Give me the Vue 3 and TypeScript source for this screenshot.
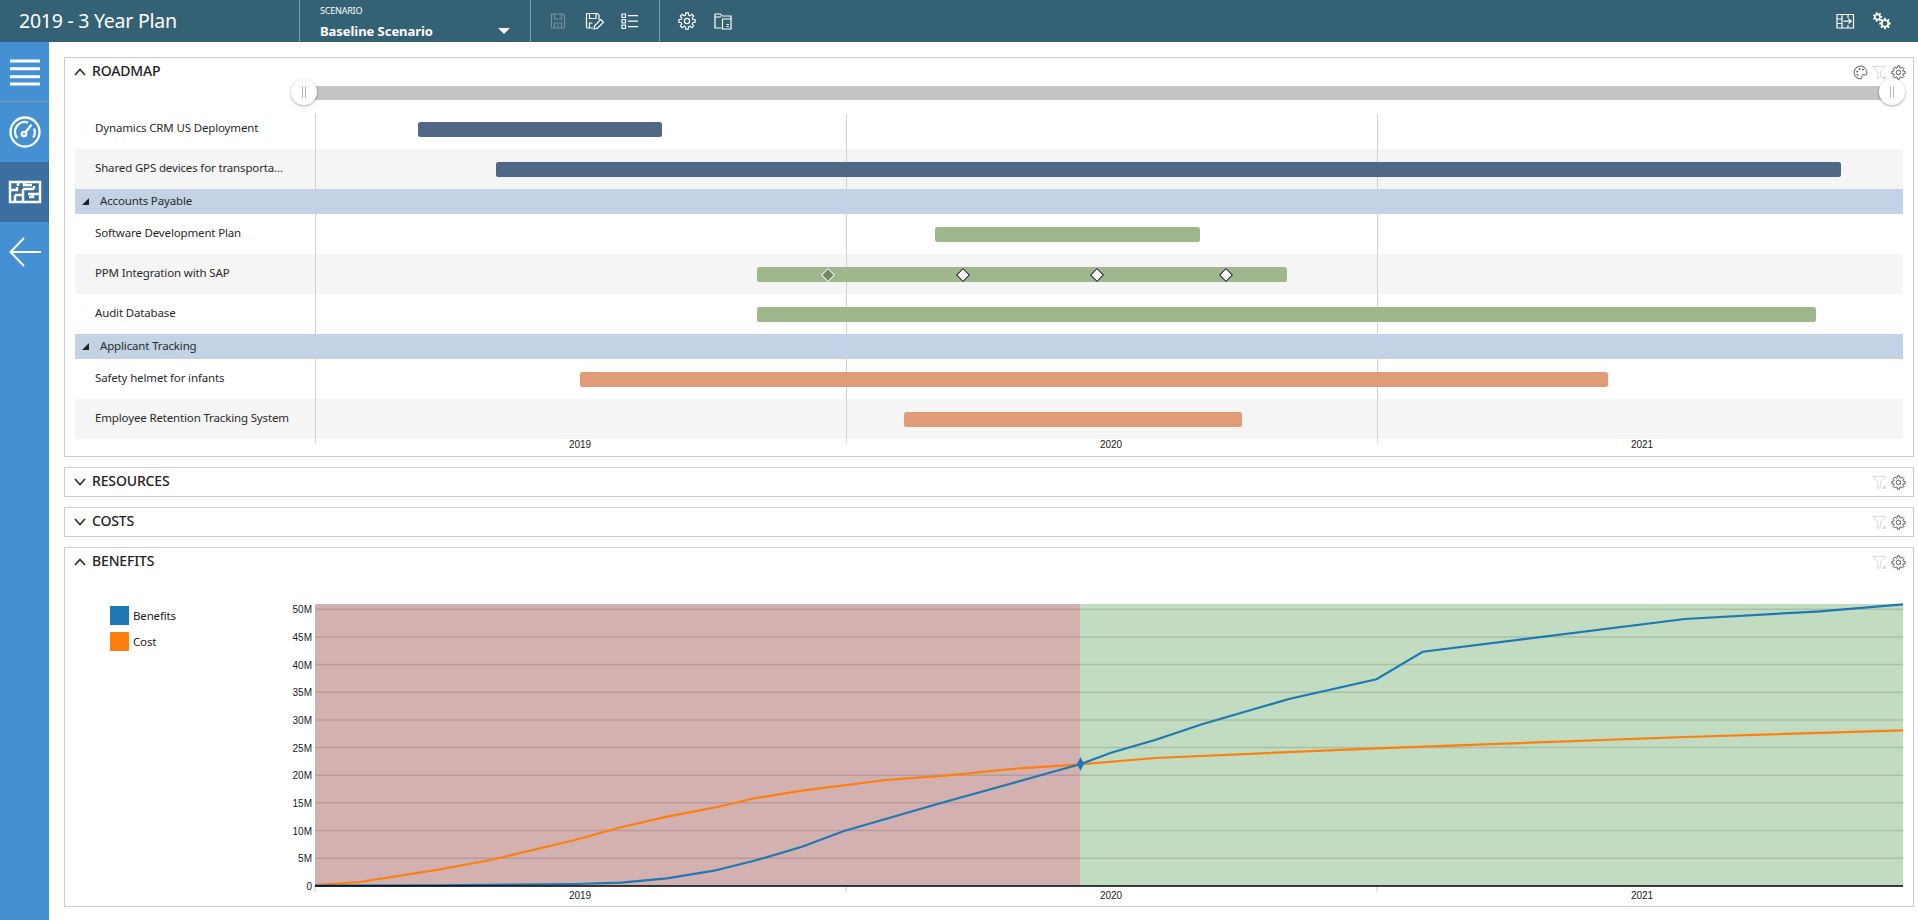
<script setup lang="ts">
interface Row { kind: 'item' | 'group'; label: string; alt?: boolean; from?: number; to?: number; color?: string; marks?: { x: number; done?: boolean }[] }

const trackX = 315
const rows: Row[] = [
  { kind: 'item', label: 'Dynamics CRM US Deployment', from: 418, to: 662, color: '#506886' },
  { kind: 'item', label: 'Shared GPS devices for transporta...', alt: true, from: 496, to: 1841, color: '#506886' },
  { kind: 'group', label: 'Accounts Payable' },
  { kind: 'item', label: 'Software Development Plan', from: 935, to: 1200, color: '#9fb78d' },
  { kind: 'item', label: 'PPM Integration with SAP', alt: true, from: 757, to: 1287, color: '#9fb78d',
    marks: [{ x: 828, done: true }, { x: 963 }, { x: 1097 }, { x: 1226 }] },
  { kind: 'item', label: 'Audit Database', from: 757, to: 1816, color: '#9fb78d' },
  { kind: 'group', label: 'Applicant Tracking' },
  { kind: 'item', label: 'Safety helmet for infants', from: 580, to: 1608, color: '#e09c77' },
  { kind: 'item', label: 'Employee Retention Tracking System', alt: true, from: 904, to: 1242, color: '#e09c77' },
]

const gridX = [315, 846, 1377]
const years = [{ t: '2019', x: 580 }, { t: '2020', x: 1111 }, { t: '2021', x: 1642 }]

const y0 = 885.8
const ticks = Array.from({ length: 11 }, (_, i) => ({
  y: y0 - i * 27.65,
  label: i === 0 ? '0' : `${i * 5}M`,
}))

const pts = (a: number[][]) => a.map(p => p.join(',')).join(' ')
const benefits = pts([[315, 885.6], [440, 885.3], [575, 884], [621, 882.7], [667, 878.3], [714, 870.7], [756, 860.3], [802, 846.7], [844, 831], [941, 803], [1080, 764.3], [1111, 752.7], [1155, 740], [1202, 724.3], [1290, 698.7], [1376.5, 679.3], [1422.7, 651.7], [1685, 619], [1820, 611.3], [1903, 604.3]])
const cost = pts([[315, 885], [360, 882], [440, 869.3], [490.5, 860], [575, 840], [621, 827.3], [667, 816.7], [714, 807.7], [756, 798], [802, 790.7], [886, 780], [945, 775.7], [1012, 769], [1080, 764.3], [1155, 758], [1376.5, 748.3], [1685, 737], [1903, 730.3]])

function gear(cx: number, cy: number, ro: number, ri: number, n: number, hole: number): string {
  const step = (Math.PI * 2) / n
  let d = ''
  for (let i = 0; i < n; i++) {
    const a = i * step
    const list = [[a - step * 0.36, ri], [a - step * 0.2, ro], [a + step * 0.2, ro], [a + step * 0.36, ri]]
    for (const [t, r] of list) {
      d += `${d ? 'L' : 'M'}${(cx + r * Math.cos(t)).toFixed(2)} ${(cy + r * Math.sin(t)).toFixed(2)}`
    }
  }
  d += 'Z'
  d += `M${cx - hole} ${cy}a${hole} ${hole} 0 1 0 ${hole * 2} 0a${hole} ${hole} 0 1 0 ${-hole * 2} 0Z`
  return d
}
const gear20 = gear(10, 10, 8.2, 6, 8, 2.6)
const gearPanel = gear(8, 8, 7.2, 5.2, 8, 2.4)
const gearA = gear(6.5, 6, 4.8, 3.4, 7, 1.8)
const gearB = gear(14, 12.5, 5.8, 4.1, 8, 2.4)
</script>

<template>
  <div class="app">
    <header class="topbar">
      <div class="title">2019 - 3 Year Plan</div>
      <div class="scenario">
        <div class="scenario-cap">SCENARIO</div>
        <div class="scenario-row">
          <span class="scenario-name">Baseline Scenario</span>
          <span class="caret"></span>
        </div>
      </div>
      <div class="tool-group wide">
        <svg class="tool dim" viewBox="0 0 20 20"><path d="M3.500 3h11.500l1.500 1.500v12.500h-13z" /><path d="M6.500 3v5h7V3M6.500 17v-5h7v5M10 13.500v2.500" /></svg>
        <svg class="tool" viewBox="0 0 20 20"><path d="M2.500 2.500h11l1.500 1.500v5M9 17h-6.500zM2.500 2.500v14.500M5.500 2.500v5h6.500v-5M5.500 17v-5h3" /><path d="M10 18l.8-3.500 6-6 2.700 2.700-6 6z" /></svg>
        <svg class="tool" viewBox="0 0 20 20"><path d="M2 3h3.500v3.500H2zM2 8.500h3.500v3.500H2zM2 14h3.500v3.500H2zM8 4.700h10M8 10.200h10M8 15.700h10" /></svg>
      </div>
      <div class="tool-group">
        <svg class="tool" viewBox="0 0 20 20"><path :d="gear20" /></svg>
        <svg class="tool" viewBox="0 0 20 20"><path d="M8.500 17H2V3h5.500l1.500 2h9v3" /><path d="M9.500 8H18v10H9.500zM2 6h6M13.500 13.500h2.500M13.500 15.500h2.500" /></svg>
      </div>
      <div class="tool-group end">
        <svg class="tool" viewBox="0 0 20 20"><path d="M2 3.500h16.500v13.500H2zM7 3.500v13.500M13 3.500v3.500M13 14v3M2 8h5M2 12.500h5" /><path d="M8.500 10.200h7.500M13.500 7.800l2.700 2.400-2.700 2.400" /></svg>
        <svg class="tool solid" viewBox="0 0 20 20"><path :d="gearA" /><path :d="gearB" /></svg>
      </div>
    </header>

    <div class="body">
      <nav class="sidebar">
        <div class="nav-item nav-first">
          <svg viewBox="0 0 30 26" class="nav-icon ham"><path d="M0 2h30M0 9.700h30M0 17.700h30M0 25h30" /></svg>
        </div>
        <div class="nav-item">
          <svg viewBox="0 0 32 32" class="nav-icon gauge">
            <circle cx="16" cy="16" r="14.500" />
            <path d="M8.300 22a9.800 9.800 0 0 1 10.700-15.500M25 12.500a9.800 9.800 0 0 1-.8 9" />
            <circle cx="15" cy="18" r="2.200" />
            <path d="M16.500 16.300L22.500 8.800" />
          </svg>
        </div>
        <div class="nav-item active">
          <svg viewBox="0 0 32 22" class="nav-icon plan">
            <path d="M1 1h30v20H1z" />
            <path d="M9 1v4M15 1v3h8M1 9h7v-3M14 8h11M14 8v13M6 14h8M6 14v7M19 13h12M24 13v3h-4M25 5v3" />
          </svg>
        </div>
        <div class="nav-item">
          <svg viewBox="0 0 32 30" class="nav-icon arrow"><path d="M15 1L1.500 15 15 29M2 15h30" /></svg>
        </div>
      </nav>

      <main class="main">
        <section class="panel roadmap">
          <div class="panel-head">
            <svg class="chev" viewBox="0 0 12 8"><path d="M1 7l5-5.500L11 7" /></svg>
            <span class="panel-title">ROADMAP</span>
            <div class="panel-tools">
              <svg class="ptool palette" viewBox="0 0 16 16">
                <path d="M8 1.200a6.800 6.800 0 1 0 0 13.600c1.400 0 1.900-.9 1.500-1.900-.5-1.200.1-2.300 1.500-2.300h2.200c1 0 1.600-.7 1.600-1.800 0-4.200-3-7.600-6.800-7.600z" />
                <circle cx="4.500" cy="7" r="1" /><circle cx="7" cy="4.300" r="1" /><circle cx="10.500" cy="4.800" r="1" /><circle cx="4.800" cy="10.500" r="1" />
              </svg>
              <svg class="ptool filter" viewBox="0 0 16 16">
                <path d="M.7 1.500h13.600L9 7.500v5.500l-3 1.500v-7z" />
                <path class="x" d="M11.500 12l3 3M14.500 12l-3 3" />
              </svg>
              <svg class="ptool cog" viewBox="0 0 16 16"><path :d="gearPanel" /></svg>
            </div>
          </div>

          <div class="slider">
            <div class="slider-track"></div>
            <span class="handle left"><i></i><i></i></span>
            <span class="handle right"><i></i><i></i></span>
          </div>

          <div class="gantt">
            <span v-for="x in gridX" :key="x" class="grid-line" :style="{ left: `${x - 75}px` }"></span>
            <template v-for="row in rows" :key="row.label">
              <div v-if="row.kind === 'group'" class="row group">
                <span class="tri"></span>
                <span class="group-label">{{ row.label }}</span>
              </div>
              <div v-else class="row item" :class="{ alt: row.alt }">
                <span class="row-label">{{ row.label }}</span>
                <div class="track">
                  <div class="bar" :style="{ left: `${row.from! - trackX}px`, width: `${row.to! - row.from!}px`, background: row.color }"></div>
                  <span v-for="m in row.marks" :key="m.x" class="mark" :class="{ done: m.done }" :style="{ left: `${m.x - trackX}px` }"></span>
                </div>
              </div>
            </template>
            <div class="years">
              <span v-for="y in years" :key="y.t" class="year" :style="{ left: `${y.x - trackX}px` }">{{ y.t }}</span>
            </div>
          </div>
        </section>

        <section class="panel collapsed">
          <div class="panel-head">
            <svg class="chev" viewBox="0 0 12 8"><path d="M1 1l5 5.500L11 1" /></svg>
            <span class="panel-title">RESOURCES</span>
            <div class="panel-tools">
              <svg class="ptool filter" viewBox="0 0 16 16"><path d="M.7 1.500h13.600L9 7.500v5.500l-3 1.500v-7z" /><path class="x" d="M11.500 12l3 3M14.500 12l-3 3" /></svg>
              <svg class="ptool cog" viewBox="0 0 16 16"><path :d="gearPanel" /></svg>
            </div>
          </div>
        </section>

        <section class="panel collapsed">
          <div class="panel-head">
            <svg class="chev" viewBox="0 0 12 8"><path d="M1 1l5 5.500L11 1" /></svg>
            <span class="panel-title">COSTS</span>
            <div class="panel-tools">
              <svg class="ptool filter" viewBox="0 0 16 16"><path d="M.7 1.500h13.600L9 7.500v5.500l-3 1.500v-7z" /><path class="x" d="M11.500 12l3 3M14.500 12l-3 3" /></svg>
              <svg class="ptool cog" viewBox="0 0 16 16"><path :d="gearPanel" /></svg>
            </div>
          </div>
        </section>

        <section class="panel benefits">
          <div class="panel-head">
            <svg class="chev" viewBox="0 0 12 8"><path d="M1 7l5-5.500L11 7" /></svg>
            <span class="panel-title">BENEFITS</span>
            <div class="panel-tools">
              <svg class="ptool filter" viewBox="0 0 16 16"><path d="M.7 1.500h13.600L9 7.500v5.500l-3 1.500v-7z" /><path class="x" d="M11.500 12l3 3M14.500 12l-3 3" /></svg>
              <svg class="ptool cog" viewBox="0 0 16 16"><path :d="gearPanel" /></svg>
            </div>
          </div>
          <div class="chart-wrap">
            <ul class="legend">
              <li><span class="swatch blue"></span>Benefits</li>
              <li><span class="swatch orange"></span>Cost</li>
            </ul>
            <svg class="chart" viewBox="270 600 1643 306">
              <rect x="315" y="604" width="765" height="282" fill="#d4b1b1" />
              <rect x="1080" y="604" width="823" height="282" fill="#c2dcc1" />
              <line v-for="t in ticks.slice(1)" :key="t.y" x1="315" x2="1903" :y1="t.y" :y2="t.y" stroke="#000" stroke-opacity=".13" stroke-width="1.500" />
              <text v-for="t in ticks" :key="t.label" class="axis" x="312" :y="t.y + 4" text-anchor="end">{{ t.label }}</text>
              <line v-for="x in gridX" :key="x" :x1="x" :x2="x" y1="886" y2="892" stroke="#ccc" />
              <text v-for="y in years" :key="y.t" class="axis" :x="y.x" y="899" text-anchor="middle">{{ y.t }}</text>
              <polyline :points="cost" fill="none" stroke="#ff7f0e" stroke-width="2.200" />
              <polyline :points="benefits" fill="none" stroke="#1f77b4" stroke-width="2.200" />
              <path d="M1080.500 757l3.500 7-3.500 7-3.500-7z" fill="#1f77b4" />
              <line x1="315" x2="1903" y1="886" y2="886" stroke="#000" stroke-width="1.500" />
            </svg>
          </div>
        </section>
      </main>
    </div>
  </div>
</template>

<style scoped>
.app {
  width: 1918px;
  height: 920px;
  display: flex;
  flex-direction: column;
  overflow: hidden;
  background: #fff;
  font-family: "Noto Sans", "Open Sans", sans-serif;
  color: #222;
}
.topbar {
  height: 42px;
  flex: none;
  display: flex;
  background: #346274;
  color: #fff;
}
.title {
  width: 300px;
  box-sizing: border-box;
  padding-left: 19px;
  font-size: 19.500px;
  line-height: 42px;
  letter-spacing: -0.25px;
  border-right: 1px solid #7f9aa6;
}
.scenario {
  width: 231px;
  box-sizing: border-box;
  padding: 4px 20px 0 20px;
  border-right: 1px solid #7f9aa6;
}
.scenario-cap {
  font-size: 9px;
  line-height: 13px;
  letter-spacing: -0.2px;
}
.scenario-row {
  display: flex;
  align-items: center;
  justify-content: space-between;
  margin-top: 5px;
  height: 18px;
}
.scenario-name {
  font-size: 13px;
  font-weight: 700;
  letter-spacing: -0.05px;
}
.caret {
  width: 0;
  height: 0;
  border-left: 6.500px solid transparent;
  border-right: 6.500px solid transparent;
  border-top: 6.500px solid #fff;
}
.tool-group {
  display: flex;
  align-items: center;
  gap: 16px;
  padding-left: 17px;
}
.tool-group.wide {
  width: 129px;
  box-sizing: border-box;
  border-right: 1px solid #7f9aa6;
}
.tool-group.end {
  margin-left: auto;
  padding: 0 27px 0 0;
}
.tool {
  width: 20px;
  height: 20px;
  fill: none;
  stroke: #fff;
  stroke-width: 1.200;
}
.tool.dim {
  stroke: #7a8f98;
}
.tool.solid {
  fill: #fff;
  fill-rule: evenodd;
  stroke: none;
}
.body {
  flex: 1;
  display: flex;
  min-height: 0;
}
.sidebar {
  width: 49px;
  flex: none;
  background: #4590d2;
  display: flex;
  flex-direction: column;
}
.nav-item {
  height: 60px;
  display: flex;
  align-items: center;
  justify-content: center;
}
.nav-first {
  box-sizing: border-box;
  border-bottom: 1px solid #7a9cb8;
}
.nav-item.active {
  background: #3a6f9f;
}
.nav-icon {
  fill: none;
  stroke: #fff;
  overflow: visible;
}
.ham {
  width: 30px;
  height: 26px;
  stroke-width: 3;
}
.gauge {
  width: 32px;
  height: 32px;
  stroke-width: 2.300;
}
.plan {
  width: 32px;
  height: 22px;
  stroke-width: 2.500;
}
.arrow {
  width: 32px;
  height: 30px;
  stroke-width: 2;
}
.main {
  flex: 1;
  min-width: 0;
  box-sizing: border-box;
  padding: 15px 4px 0 15px;
  display: flex;
  flex-direction: column;
  gap: 10px;
}
.panel {
  box-sizing: border-box;
  border: 1px solid #ccc;
}
.roadmap {
  height: 400px;
}
.collapsed {
  height: 30px;
}
.benefits {
  height: 360px;
}
.panel-head {
  height: 28px;
  display: flex;
  align-items: center;
  padding: 0 7px 0 9px;
}
.chev {
  width: 12px;
  height: 8px;
  fill: none;
  stroke: #333;
  stroke-width: 1.800;
  margin-right: 6px;
}
.panel-title {
  font-size: 14px;
  line-height: 18px;
  padding-bottom: 2px;
  font-weight: 500;
  letter-spacing: -0.15px;
  color: #222;
}
.panel-tools {
  margin-left: auto;
  display: flex;
  gap: 4px;
  align-items: center;
}
.ptool {
  width: 15px;
  height: 15px;
  fill: none;
  stroke-width: 1;
}
.palette,
.cog {
  stroke: #4c5258;
}
.palette circle {
  fill: #4c5258;
  stroke: none;
}
.filter {
  stroke: #d6d6d6;
}
.filter .x {
  stroke: #f0a8a8;
}
.slider {
  position: relative;
  height: 23px;
  margin-left: 238px;
  margin-right: 21px;
}
.slider-track {
  height: 14px;
  background: #c4c4c4;
}
.handle {
  position: absolute;
  top: -7px;
  width: 26px;
  height: 26px;
  box-sizing: border-box;
  border-radius: 50%;
  background: #fff;
  box-shadow: 0 1px 3px rgba(0, 0, 0, 0.35);
  display: flex;
  align-items: center;
  justify-content: center;
  gap: 2px;
}
.handle.left {
  left: -12px;
}
.handle.right {
  right: -13px;
}
.handle i {
  width: 1px;
  height: 12px;
  background: #b5b5b5;
}
.gantt {
  position: relative;
  margin: 0 10px;
}
.grid-line {
  position: absolute;
  top: 5px;
  height: 329px;
  width: 1px;
  background: #d0d0d0;
}
.row {
  display: flex;
}
.item {
  height: 40px;
}
.alt {
  background: #f5f5f5;
}
.group {
  height: 25px;
  align-items: center;
  background: #c3d2e5;
}
.tri {
  width: 0;
  height: 0;
  margin-left: 7px;
  margin-right: 11px;
  border-left: 7px solid transparent;
  border-bottom: 7px solid #222;
}
.group-label,
.row-label {
  font-size: 11.500px;
  letter-spacing: -0.15px;
  color: #2a2a2a;
}
.group-label {
  line-height: 23px;
  height: 25px;
}
.row-label {
  width: 240px;
  flex: none;
  box-sizing: border-box;
  padding-left: 20px;
  line-height: 37px;
}
.track {
  position: relative;
  flex: 1;
}
.bar {
  position: absolute;
  top: 13px;
  height: 15px;
  border-radius: 2.500px;
}
.mark {
  position: absolute;
  top: 15.500px;
  width: 10px;
  height: 10px;
  margin-left: -5px;
  box-sizing: border-box;
  background: #fff;
  border: 1.300px solid #111;
  transform: rotate(45deg);
}
.mark.done {
  background: #738763;
  border-color: #fff;
}
.years {
  position: relative;
  height: 17px;
  margin-left: 240px;
}
.year {
  position: absolute;
  top: 0;
  transform: translateX(-50%);
  font-family: "Liberation Sans", Arial, sans-serif;
  font-size: 10px;
  line-height: 12px;
  color: #222;
}
.chart-wrap {
  display: flex;
  height: 330px;
}
.legend {
  list-style: none;
  margin: 0;
  padding: 30px 0 0 45px;
  width: 205px;
  box-sizing: border-box;
  flex: none;
  display: flex;
  flex-direction: column;
  gap: 7px;
  font-size: 11.500px;
  letter-spacing: -0.15px;
}
.legend li {
  display: flex;
  align-items: center;
  gap: 4px;
  height: 19px;
}
.swatch {
  width: 19px;
  height: 19px;
  display: block;
}
.swatch.blue {
  background: #1f77b4;
}
.swatch.orange {
  background: #ff7f0e;
}
.chart {
  width: 1643px;
  height: 306px;
  margin-top: 24px;
  flex: none;
  display: block;
}
.axis {
  font-family: "Liberation Sans", Arial, sans-serif;
  font-size: 10px;
  fill: #222;
}
</style>
